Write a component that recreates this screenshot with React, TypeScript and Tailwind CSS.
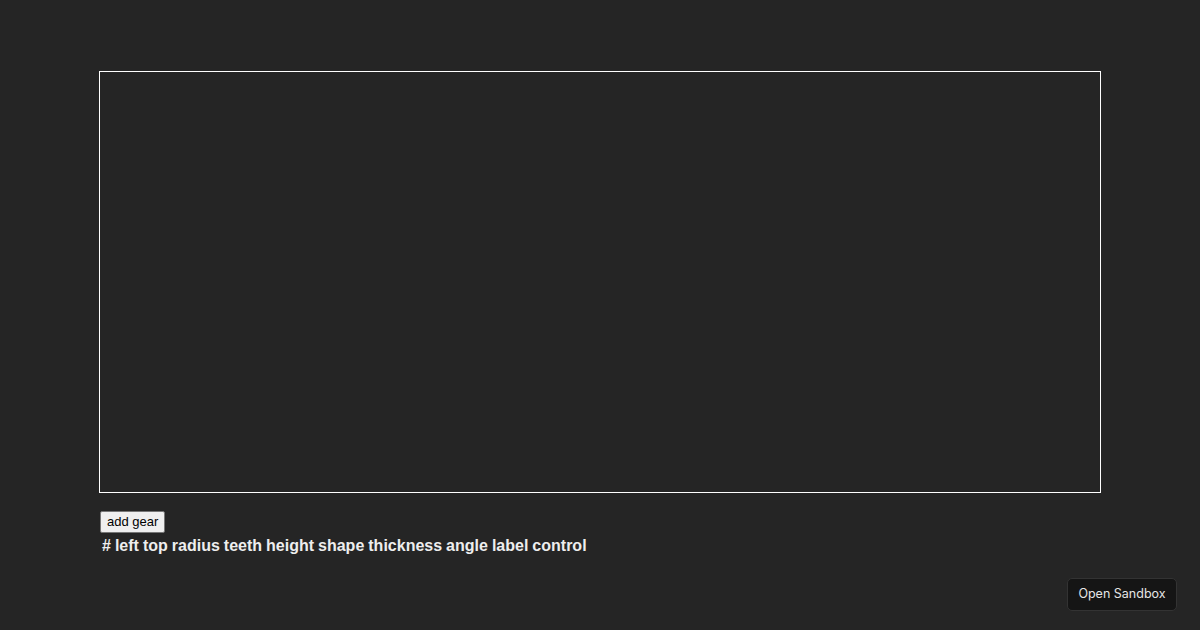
const columns = ['#', 'left', 'top', 'radius', 'teeth', 'height', 'shape', 'thickness', 'angle', 'label', 'control']

export default function App() {
  return (
    <div className="relative h-[630px] w-[1200px] overflow-hidden bg-[#252525] font-['Liberation_Sans',Arial,sans-serif] text-[#eeeeee]">
      <div className="mx-auto w-[1002px] pt-[71px]">
        {/* gear canvas */}
        <div className="h-[422px] w-[1002px] border border-white" />

        <div className="mt-[16px] pl-px">
          <button
            type="button"
            className="h-[22px] rounded-[2px] border border-[#767676] bg-[#efefef] px-[6px] text-[13px] leading-[20px] text-black"
          >
            add gear
          </button>
        </div>

        <table className="mt-px border-separate border-spacing-[2px] text-[16px] font-bold">
          <thead>
            <tr>
              {columns.map((c) => (
                <th key={c} className="px-px py-px text-left leading-[18px]">
                  {c}
                </th>
              ))}
            </tr>
          </thead>
        </table>
      </div>

      <button
        type="button"
        className="absolute bottom-[19px] right-[23px] h-[33px] w-[110px] rounded-[5px] border border-[#333333] bg-[#151515] font-['Inter',sans-serif] text-[12.5px] text-[#e5e5e5]"
      >
        Open Sandbox
      </button>
    </div>
  )
}
